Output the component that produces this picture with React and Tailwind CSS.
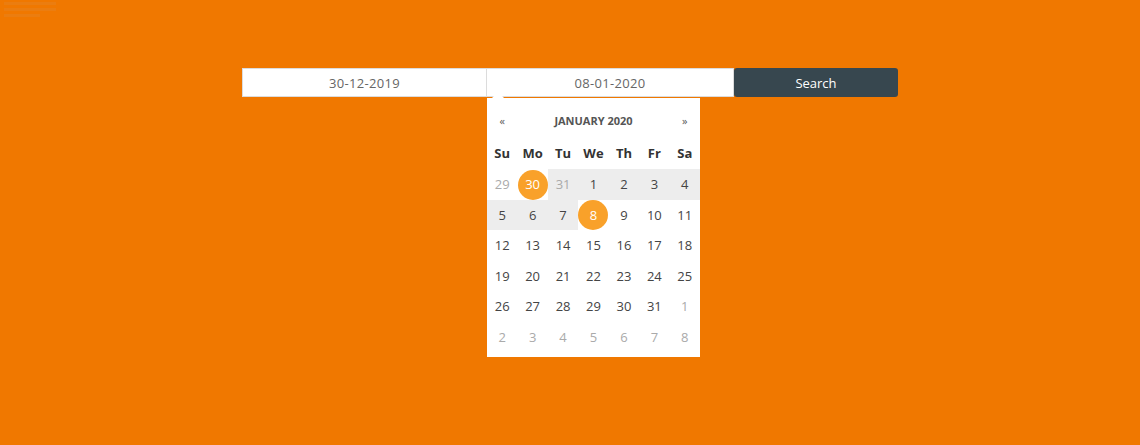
export default function App() {
  const weeks = [
    [[29, 'o'], [30, 's'], [31, 'or'], [1, 'r'], [2, 'r'], [3, 'r'], [4, 'r']],
    [[5, 'r'], [6, 'r'], [7, 'r'], [8, 's'], [9, ''], [10, ''], [11, '']],
    [[12, ''], [13, ''], [14, ''], [15, ''], [16, ''], [17, ''], [18, '']],
    [[19, ''], [20, ''], [21, ''], [22, ''], [23, ''], [24, ''], [25, '']],
    [[26, ''], [27, ''], [28, ''], [29, ''], [30, ''], [31, ''], [1, 'o']],
    [[2, 'o'], [3, 'o'], [4, 'o'], [5, 'o'], [6, 'o'], [7, 'o'], [8, 'o']],
  ];
  const days = ['Su', 'Mo', 'Tu', 'We', 'Th', 'Fr', 'Sa'];
  return (
    <div className="w-[1140px] h-[445px] bg-[#f07800] relative overflow-hidden" style={{ fontFamily: '"Open Sans", sans-serif' }}>
      <div className="absolute left-[4px] top-[2px] flex flex-col gap-[3px] opacity-10">
        <div className="w-[52px] h-[3px] bg-[#c8b0a0]"></div>
        <div className="w-[52px] h-[3px] bg-[#c8b0a0]"></div>
        <div className="w-[36px] h-[3px] bg-[#c8b0a0]"></div>
      </div>
      <div className="pt-[68px] flex justify-center">
        <div className="flex">
          <div className="w-[245px] h-[29px] pt-[2px] bg-white border border-[#dcdcdc] flex items-center justify-center text-[13px] text-[#666] tracking-[0.3px]">30-12-2019</div>
          <div className="relative">
            <div className="w-[247px] h-[29px] pt-[2px] bg-white border-y border-r border-[#dcdcdc] flex items-center justify-center text-[13px] text-[#666] tracking-[0.3px]">08-01-2020</div>
            <div className="absolute left-0 top-[30px] w-[213px] bg-white pt-[7px] pb-[5px] z-10">
              <div className="absolute left-[5px] top-[-6px] w-0 h-0 border-l-[6px] border-r-[6px] border-b-[6px] border-l-transparent border-r-transparent border-b-white"></div>
              <div className="h-[33px] pb-[1px] grid grid-cols-7 items-center text-[#555]">
                <div className="text-center text-[11px]">«</div>
                <div className="col-span-5 text-center text-[11px] font-bold">JANUARY 2020</div>
                <div className="text-center text-[11px]">»</div>
              </div>
              <div className="grid grid-cols-7 h-[31.4px] items-center text-[13px] font-bold text-[#333]">
                {days.map((d) => (
                  <div key={d} className="text-center">{d}</div>
                ))}
              </div>
              {weeks.map((w, i) => (
                <div key={i} className="grid grid-cols-7 h-[30.5px] text-[13px]">
                  {w.map(([n, t], j) => {
                    if (t === 's') {
                      return (
                        <div key={j} className="flex items-center justify-center">
                          <div className="w-[30px] h-[30px] pt-[1px] rounded-full bg-[#f9a12a] text-white flex items-center justify-center">{n}</div>
                        </div>
                      );
                    }
                    const bg = t === 'r' || t === 'or' ? 'bg-[#ededed]' : '';
                    const col = t === 'o' || t === 'or' ? 'text-[#aaa]' : 'text-[#444]';
                    return (
                      <div key={j} className={`flex items-center justify-center pt-[1px] ${bg} ${col}`}>{n}</div>
                    );
                  })}
                </div>
              ))}
            </div>
          </div>
          <div className="w-[164px] h-[29px] pt-[2px] bg-[#37474f] rounded-[3px] flex items-center justify-center text-white text-[13px]">Search</div>
        </div>
      </div>
    </div>
  );
}
